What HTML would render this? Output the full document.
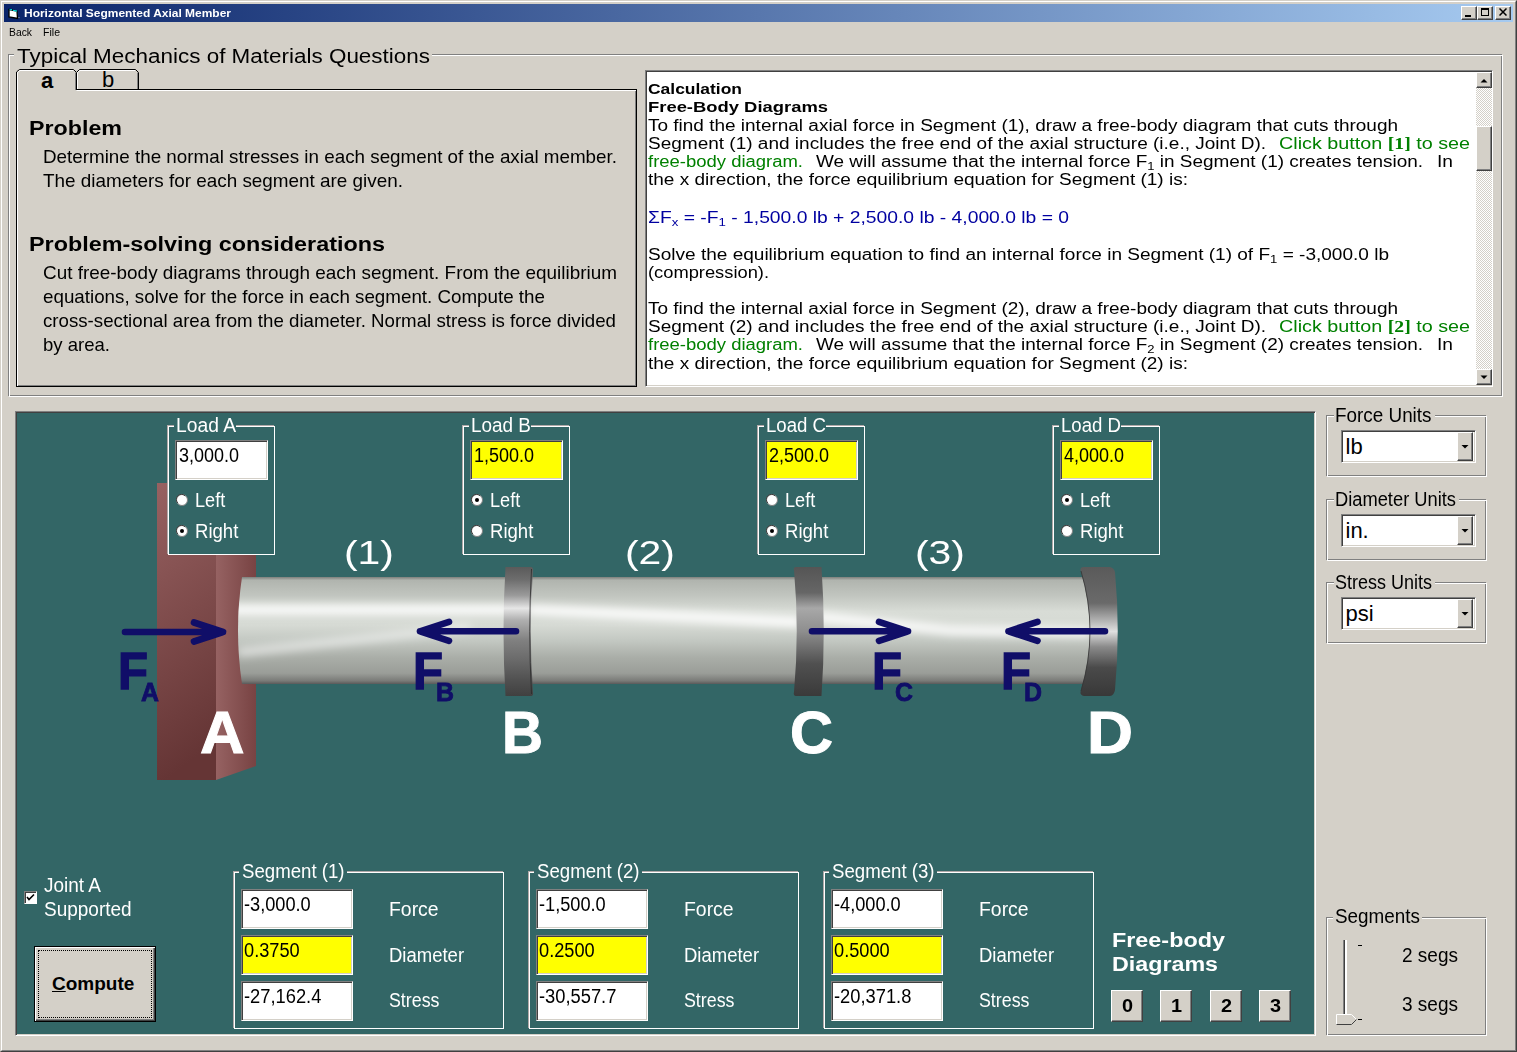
<!DOCTYPE html><html><head><meta charset="utf-8"><style>html,body{margin:0;padding:0;overflow:hidden;width:1517px;height:1052px}body{position:relative;font-family:'Liberation Sans', sans-serif}</style></head><body><div style="position:absolute;left:0px;top:0px;width:1517px;height:1052px;background:#d4d0c8"></div>
<div style="position:absolute;left:1px;top:1px;width:1515px;height:1050px;box-sizing:border-box;border:1px solid;border-color:#fff #808080 #808080 #fff"></div>
<div style="position:absolute;left:0px;top:0px;width:1517px;height:1052px;box-sizing:border-box;border:1px solid;border-color:#d4d0c8 #404040 #404040 #d4d0c8"></div>
<div style="position:absolute;left:4px;top:4px;width:1509px;height:18px;background:linear-gradient(to right,#0a246a,#a6caf0)"></div>
<svg style="position:absolute;left:8px;top:8px" width="14" height="13" viewBox="0 0 14 13"><path d="M1 1.5 L9 3 L9.5 10.5 L7 10 L1 9 Z" fill="#fff" stroke="#000" stroke-width="1.3"/><path d="M1.5 1.8 L4 1.6 M5 2.3 L9 3.1" stroke="#00e6e6" stroke-width="1.1" fill="none"/><path d="M10.5 9 L11.5 10" stroke="#a0a0a0" stroke-width="1"/></svg>
<div style="position:absolute;left:24px;top:7.69px;white-space:pre;line-height:11px;font-family:'Liberation Sans', sans-serif;font-size:11px;font-weight:700;color:#fff;transform:scaleX(1.0877);transform-origin:0 0">Horizontal Segmented Axial Member</div>
<div style="position:absolute;left:1461px;top:6px;width:16px;height:14px;box-sizing:border-box;background:#d4d0c8;border:1px solid;border-color:#fff #404040 #404040 #fff;box-shadow:inset -1px -1px #808080"></div>
<div style="position:absolute;left:1477px;top:6px;width:16px;height:14px;box-sizing:border-box;background:#d4d0c8;border:1px solid;border-color:#fff #404040 #404040 #fff;box-shadow:inset -1px -1px #808080"></div>
<div style="position:absolute;left:1495px;top:6px;width:16px;height:14px;box-sizing:border-box;background:#d4d0c8;border:1px solid;border-color:#fff #404040 #404040 #fff;box-shadow:inset -1px -1px #808080"></div>
<div style="position:absolute;left:1465px;top:15px;width:6px;height:2px;background:#000"></div>
<div style="position:absolute;left:1481px;top:8px;width:8px;height:8px;box-sizing:border-box;border:1px solid #000;border-top-width:2px"></div>
<svg style="position:absolute;left:1499px;top:8px" width="8" height="8" viewBox="0 0 8 8"><path d="M0.5 0.5L7.5 7.5M7.5 0.5L0.5 7.5" stroke="#000" stroke-width="1.5"/></svg>
<div style="position:absolute;left:9px;top:26.69px;white-space:pre;line-height:11px;font-family:'Liberation Sans', sans-serif;font-size:11px;font-weight:400;color:#000;transform:scaleX(0.9400);transform-origin:0 0">Back</div>
<div style="position:absolute;left:43px;top:26.69px;white-space:pre;line-height:11px;font-family:'Liberation Sans', sans-serif;font-size:11px;font-weight:400;color:#000;transform:scaleX(0.9586);transform-origin:0 0">File</div>
<div style="position:absolute;left:8px;top:54px;width:1494px;height:342px;border:1px solid #808080;box-sizing:border-box"></div>
<div style="position:absolute;left:9px;top:55px;width:1494px;height:342px;border:1px solid #fff;box-sizing:border-box"></div>
<div style="position:absolute;left:14px;top:44px;width:418px;height:20px;background:#d4d0c8"></div>
<div style="position:absolute;left:17px;top:46.07px;white-space:pre;line-height:20px;font-family:'Liberation Sans', sans-serif;font-size:20px;font-weight:400;color:#000;transform:scaleX(1.1225);transform-origin:0 0">Typical Mechanics of Materials Questions</div>
<div style="position:absolute;left:16px;top:89px;width:621px;height:298px;box-sizing:border-box;background:#d4d0c8;border:1px solid #000;box-shadow:inset 1px 1px #fff, inset -1px -1px #808080"></div>
<svg style="position:absolute;left:0;top:0" width="700" height="100" viewBox="0 0 700 100"><path d="M76 89 L76 72.5 L79.5 69 L135.5 69 L139 72.5 L139 89 Z" fill="#d4d0c8"/><path d="M76.5 89 L76.5 72.5 L79.5 69.5 L135.5 69.5 L138.5 72.5 L138.5 89" stroke="#000" fill="none"/><path d="M77.5 89 L77.5 72.5 L80 70.5 L135 70.5" stroke="#fff" fill="none"/><path d="M137.5 72.5 L137.5 89" stroke="#808080" fill="none"/><path d="M76 89.5 L637 89.5" stroke="#000"/><path d="M76 90.5 L635 90.5" stroke="#fff"/><path d="M16 92 L16 72 L19 69 L73.5 69 L77 72.5 L77 89 L76 92 Z" fill="#d4d0c8"/><path d="M16.5 92 L16.5 72 L19.5 69.5 L73.5 69.5 L76.5 72.5 L76.5 90" stroke="#000" fill="none"/><path d="M17.5 92 L17.5 72.5 L20 70.5 L73 70.5" stroke="#fff" fill="none"/><path d="M75.5 72.5 L75.5 90" stroke="#808080" fill="none"/></svg>
<div style="position:absolute;left:41px;top:70.38px;white-space:pre;line-height:22px;font-family:'Liberation Sans', sans-serif;font-size:22px;font-weight:700;color:#000">a</div>
<div style="position:absolute;left:102px;top:69.38px;white-space:pre;line-height:22px;font-family:'Liberation Sans', sans-serif;font-size:22px;font-weight:400;color:#000">b</div>
<div style="position:absolute;left:29px;top:118.07px;white-space:pre;line-height:20px;font-family:'Liberation Sans', sans-serif;font-size:20px;font-weight:700;color:#000;transform:scaleX(1.1620);transform-origin:0 0">Problem</div>
<div style="position:absolute;left:43px;top:146.92px;white-space:pre;line-height:19px;font-family:'Liberation Sans', sans-serif;font-size:19px;font-weight:400;color:#000;transform:scaleX(0.9900);transform-origin:0 0">Determine the normal stresses in each segment of the axial member.</div>
<div style="position:absolute;left:43px;top:170.92px;white-space:pre;line-height:19px;font-family:'Liberation Sans', sans-serif;font-size:19px;font-weight:400;color:#000;transform:scaleX(0.9938);transform-origin:0 0">The diameters for each segment are given.</div>
<div style="position:absolute;left:29px;top:234.07px;white-space:pre;line-height:20px;font-family:'Liberation Sans', sans-serif;font-size:20px;font-weight:700;color:#000;transform:scaleX(1.1691);transform-origin:0 0">Problem-solving considerations</div>
<div style="position:absolute;left:43px;top:262.92px;white-space:pre;line-height:19px;font-family:'Liberation Sans', sans-serif;font-size:19px;font-weight:400;color:#000;transform:scaleX(0.9954);transform-origin:0 0">Cut free-body diagrams through each segment. From the equilibrium</div>
<div style="position:absolute;left:43px;top:286.92px;white-space:pre;line-height:19px;font-family:'Liberation Sans', sans-serif;font-size:19px;font-weight:400;color:#000;transform:scaleX(0.9881);transform-origin:0 0">equations, solve for the force in each segment. Compute the</div>
<div style="position:absolute;left:43px;top:310.92px;white-space:pre;line-height:19px;font-family:'Liberation Sans', sans-serif;font-size:19px;font-weight:400;color:#000;transform:scaleX(0.9830);transform-origin:0 0">cross-sectional area from the diameter. Normal stress is force divided</div>
<div style="position:absolute;left:43px;top:334.92px;white-space:pre;line-height:19px;font-family:'Liberation Sans', sans-serif;font-size:19px;font-weight:400;color:#000;transform:scaleX(0.9759);transform-origin:0 0">by area.</div>
<div style="position:absolute;left:645px;top:70px;width:848px;height:317px;box-sizing:border-box;background:#fff;border:1px solid;border-color:#808080 #fff #fff #808080;box-shadow:inset 1px 1px #404040, inset -1px -1px #d4d0c8"></div>
<div style="position:absolute;left:1476px;top:72px;width:16px;height:313px;background-color:#eceae6;background-image:repeating-conic-gradient(#fff 0 25%, #d4d0c8 0 50%);background-size:2px 2px"></div>
<div style="position:absolute;left:1476px;top:72px;width:16px;height:16px;box-sizing:border-box;background:#d4d0c8;border:1px solid;border-color:#fff #404040 #404040 #fff;box-shadow:inset -1px -1px #808080"></div>
<div style="position:absolute;left:1476px;top:126px;width:16px;height:45px;box-sizing:border-box;background:#d4d0c8;border:1px solid;border-color:#fff #404040 #404040 #fff;box-shadow:inset -1px -1px #808080"></div>
<div style="position:absolute;left:1476px;top:369px;width:16px;height:16px;box-sizing:border-box;background:#d4d0c8;border:1px solid;border-color:#fff #404040 #404040 #fff;box-shadow:inset -1px -1px #808080"></div>
<svg style="position:absolute;left:1476px;top:72px" width="16" height="16"><path d="M4.5 10.5 L8 7 L11.5 10.5 Z" fill="#000"/></svg>
<svg style="position:absolute;left:1476px;top:369px" width="16" height="16"><path d="M4.5 6.5 L8 10 L11.5 6.5 Z" fill="#000"/></svg>
<div style="position:absolute;left:648px;top:80.88px;white-space:pre;line-height:15.5px;font-family:'Liberation Sans', sans-serif;font-size:15.5px;font-weight:400;color:#000;transform:scaleX(1.1251);transform-origin:0 0"><b>Calculation</b></div>
<div style="position:absolute;left:648px;top:98.88px;white-space:pre;line-height:15.5px;font-family:'Liberation Sans', sans-serif;font-size:15.5px;font-weight:400;color:#000;transform:scaleX(1.1873);transform-origin:0 0"><b>Free-Body Diagrams</b></div>
<div style="position:absolute;left:648px;top:117.66px;white-space:pre;line-height:16px;font-family:'Liberation Sans', sans-serif;font-size:16px;font-weight:400;color:#000;transform:scaleX(1.1861);transform-origin:0 0">To find the internal axial force in Segment (1), draw a free-body diagram that cuts through</div>
<div style="position:absolute;left:648px;top:135.56px;white-space:pre;line-height:16px;font-family:'Liberation Sans', sans-serif;font-size:16px;font-weight:400;color:#000;transform:scaleX(1.1879);transform-origin:0 0">Segment (1) and includes the free end of the axial structure (i.e., Joint D).</div>
<div style="position:absolute;left:1279px;top:135.56px;white-space:pre;line-height:16px;font-family:'Liberation Sans', sans-serif;font-size:16px;font-weight:400;color:#000;transform:scaleX(1.2344);transform-origin:0 0"><span style="color:#008000">Click button <b style="font-family:'Liberation Serif', serif">[1]</b> to see</span></div>
<div style="position:absolute;left:648px;top:153.66px;white-space:pre;line-height:16px;font-family:'Liberation Sans', sans-serif;font-size:16px;font-weight:400;color:#000;transform:scaleX(1.1542);transform-origin:0 0"><span style="color:#008000">free-body diagram.</span></div>
<div style="position:absolute;left:816px;top:153.66px;white-space:pre;line-height:16px;font-family:'Liberation Sans', sans-serif;font-size:16px;font-weight:400;color:#000;transform:scaleX(1.1838);transform-origin:0 0">We will assume that the internal force F<span style="font-size:11px;position:relative;top:3px">1</span> in Segment (1) creates tension.</div>
<div style="position:absolute;left:1437px;top:153.66px;white-space:pre;line-height:16px;font-family:'Liberation Sans', sans-serif;font-size:16px;font-weight:400;color:#000;transform:scaleX(1.1991);transform-origin:0 0">In</div>
<div style="position:absolute;left:648px;top:171.86px;white-space:pre;line-height:16px;font-family:'Liberation Sans', sans-serif;font-size:16px;font-weight:400;color:#000;transform:scaleX(1.1882);transform-origin:0 0">the x direction, the force equilibrium equation for Segment (1) is:</div>
<div style="position:absolute;left:648px;top:210.46px;white-space:pre;line-height:16px;font-family:'Liberation Sans', sans-serif;font-size:16px;font-weight:400;color:#000;transform:scaleX(1.2053);transform-origin:0 0"><span style="color:#0000a0">&Sigma;F<span style="font-size:11px;position:relative;top:3px">x</span> = -F<span style="font-size:11px;position:relative;top:3px">1</span> - 1,500.0 lb + 2,500.0 lb - 4,000.0 lb = 0</span></div>
<div style="position:absolute;left:648px;top:246.86px;white-space:pre;line-height:16px;font-family:'Liberation Sans', sans-serif;font-size:16px;font-weight:400;color:#000;transform:scaleX(1.1895);transform-origin:0 0">Solve the equilibrium equation to find an internal force in Segment (1) of F<span style="font-size:11px;position:relative;top:3px">1</span> = -3,000.0 lb</div>
<div style="position:absolute;left:648px;top:265.36px;white-space:pre;line-height:16px;font-family:'Liberation Sans', sans-serif;font-size:16px;font-weight:400;color:#000;transform:scaleX(1.1435);transform-origin:0 0">(compression).</div>
<div style="position:absolute;left:648px;top:300.96px;white-space:pre;line-height:16px;font-family:'Liberation Sans', sans-serif;font-size:16px;font-weight:400;color:#000;transform:scaleX(1.1861);transform-origin:0 0">To find the internal axial force in Segment (2), draw a free-body diagram that cuts through</div>
<div style="position:absolute;left:648px;top:318.96px;white-space:pre;line-height:16px;font-family:'Liberation Sans', sans-serif;font-size:16px;font-weight:400;color:#000;transform:scaleX(1.1879);transform-origin:0 0">Segment (2) and includes the free end of the axial structure (i.e., Joint D).</div>
<div style="position:absolute;left:1279px;top:318.96px;white-space:pre;line-height:16px;font-family:'Liberation Sans', sans-serif;font-size:16px;font-weight:400;color:#000;transform:scaleX(1.2344);transform-origin:0 0"><span style="color:#008000">Click button <b style="font-family:'Liberation Serif', serif">[2]</b> to see</span></div>
<div style="position:absolute;left:648px;top:337.26px;white-space:pre;line-height:16px;font-family:'Liberation Sans', sans-serif;font-size:16px;font-weight:400;color:#000;transform:scaleX(1.1542);transform-origin:0 0"><span style="color:#008000">free-body diagram.</span></div>
<div style="position:absolute;left:816px;top:337.26px;white-space:pre;line-height:16px;font-family:'Liberation Sans', sans-serif;font-size:16px;font-weight:400;color:#000;transform:scaleX(1.1838);transform-origin:0 0">We will assume that the internal force F<span style="font-size:11px;position:relative;top:3px">2</span> in Segment (2) creates tension.</div>
<div style="position:absolute;left:1437px;top:337.26px;white-space:pre;line-height:16px;font-family:'Liberation Sans', sans-serif;font-size:16px;font-weight:400;color:#000;transform:scaleX(1.1991);transform-origin:0 0">In</div>
<div style="position:absolute;left:648px;top:355.96px;white-space:pre;line-height:16px;font-family:'Liberation Sans', sans-serif;font-size:16px;font-weight:400;color:#000;transform:scaleX(1.1882);transform-origin:0 0">the x direction, the force equilibrium equation for Segment (2) is:</div>
<div style="position:absolute;left:15px;top:411px;width:1301px;height:625px;box-sizing:border-box;background:#336666;border:1px solid;border-color:#808080 #fff #fff #808080;box-shadow:inset 1px 1px #404040, inset -1px -1px #d4d0c8"></div>
<svg style="position:absolute;left:0;top:0" width="1517" height="1052" viewBox="0 0 1517 1052"><defs>
<linearGradient id="wallL" x1="0" y1="0" x2="0.15" y2="1"><stop offset="0" stop-color="#976161"/><stop offset="1" stop-color="#653535"/></linearGradient>
<linearGradient id="wallR" x1="0" y1="0" x2="1" y2="0"><stop offset="0" stop-color="#966262"/><stop offset="1" stop-color="#784343"/></linearGradient>
<linearGradient id="cylb" x1="0" y1="0" x2="0" y2="1"><stop offset="0" stop-color="#7e807c"/><stop offset="0.03" stop-color="#b0b4ae"/><stop offset="0.18" stop-color="#c2c6c0"/><stop offset="0.32" stop-color="#d8dcd6"/><stop offset="0.45" stop-color="#d6dad4"/><stop offset="0.6" stop-color="#c2c7c1"/><stop offset="0.75" stop-color="#aaaea8"/><stop offset="0.9" stop-color="#9a9d98"/><stop offset="0.97" stop-color="#7a7b78"/><stop offset="1" stop-color="#5a5a5a"/></linearGradient>
<filter id="blur6" x="-20%" y="-50%" width="140%" height="200%"><feGaussianBlur stdDeviation="4.5"/></filter>
<clipPath id="cylclip"><path d="M242 579 L1090 579 L1090 681 L242 681 Q234 630.5 242 579 Z"/></clipPath>
<linearGradient id="ringB" x1="0" y1="0" x2="0" y2="1"><stop offset="0" stop-color="#5a5a5a"/><stop offset="0.1" stop-color="#6e6e6e"/><stop offset="0.22" stop-color="#9a9a9a"/><stop offset="0.32" stop-color="#e6e6e6"/><stop offset="0.41" stop-color="#b0b0b0"/><stop offset="0.57" stop-color="#808080"/><stop offset="0.72" stop-color="#6a6a6a"/><stop offset="0.88" stop-color="#505050"/><stop offset="1" stop-color="#404040"/></linearGradient>
<linearGradient id="ringC" x1="0" y1="0" x2="0" y2="1">
<stop offset="0" stop-color="#555"/><stop offset="0.2" stop-color="#666"/><stop offset="0.32" stop-color="#a8a8a8"/>
<stop offset="0.5" stop-color="#8e8e8e"/><stop offset="0.75" stop-color="#505050"/><stop offset="1" stop-color="#3a3a3a"/>
</linearGradient>
<linearGradient id="ringD" x1="0" y1="0" x2="0" y2="1">
<stop offset="0" stop-color="#5a5a5a"/><stop offset="0.28" stop-color="#6a6a6a"/><stop offset="0.5" stop-color="#e0e0e0"/>
<stop offset="0.62" stop-color="#8a8a8a"/><stop offset="0.78" stop-color="#4a4a4a"/><stop offset="1" stop-color="#383838"/>
</linearGradient>
</defs><path d="M157 483 L216 483 L216 780 L157 780 Z" fill="url(#wallL)"/><path d="M216 483 L256 471 L256 766 L216 780 Z" fill="url(#wallR)"/><path d="M242 577 L1090 577 L1090 684 L242 684 Q234 630.5 242 577 Z" fill="url(#cylb)"/><g clip-path="url(#cylclip)"><g filter="url(#blur6)" fill="#fff"><path d="M230 605 L510 605 L510 614 L230 614 Z" opacity="0.95"/><path d="M238 648 L470 624 L470 631 L238 657 Z" opacity="0.55"/><path d="M528 605 L800 617 L800 627 L528 614 Z" opacity="0.95"/><path d="M818 612 L950 626 L1090 628 L1090 637 L950 635 L818 622 Z" opacity="0.9"/></g></g><path d="M505.5 567 L531.5 567 Q533.5 568 533 570 Q528.5 631 533 693 Q533.5 695.5 531.5 696 L505.5 696 Q501.5 631 505.5 567 Z" fill="url(#ringB)"/><path d="M531.5 569 Q528 631 531.5 694" stroke="#2a2a2a" stroke-width="0.8" fill="none"/><path d="M795.5 567 L821.5 567 Q826 631 821.5 696 L795.5 696 Q793 695 794 692 Q799.5 631 794 570 Q793 568 795.5 567 Z" fill="url(#ringC)"/><path d="M1084 567 L1110 567 Q1114 568 1115 572 Q1120.5 631 1115 690 Q1114 695.5 1110 696 L1084 696 Q1080 695 1080.5 692 Q1099 631 1080.5 570 Q1080 567 1084 567 Z" fill="url(#ringD)"/><path d="M1081 571 Q1099 631 1081 691" stroke="#333" stroke-width="0.8" fill="none"/><path d="M125 632 L223 632 M194 622.5 L223 632 L194 641.5" stroke="#100e68" stroke-width="6.6" stroke-linecap="round" stroke-linejoin="round" fill="none"/><path d="M516 631.3 L420 631.3 M449 621.8 L420 631.3 L449 640.8" stroke="#100e68" stroke-width="6.6" stroke-linecap="round" stroke-linejoin="round" fill="none"/><path d="M812 631.3 L908 631.3 M879 621.8 L908 631.3 L879 640.8" stroke="#100e68" stroke-width="6.6" stroke-linecap="round" stroke-linejoin="round" fill="none"/><path d="M1105 631.3 L1008.5 631.3 M1037.5 621.8 L1008.5 631.3 L1037.5 640.8" stroke="#100e68" stroke-width="6.6" stroke-linecap="round" stroke-linejoin="round" fill="none"/></svg>
<div style="position:absolute;left:118px;top:644.98px;white-space:pre;line-height:52px;font-family:'Liberation Sans', sans-serif;font-size:52px;font-weight:700;color:#100e68;transform:scaleX(0.9444);transform-origin:0 0;-webkit-text-stroke:1.4px #100e68">F</div>
<div style="position:absolute;left:140.5px;top:679.84px;white-space:pre;line-height:25px;font-family:'Liberation Sans', sans-serif;font-size:25px;font-weight:700;color:#100e68;transform:scaleX(0.9965);transform-origin:0 0;-webkit-text-stroke:0.8px #100e68">A</div>
<div style="position:absolute;left:413px;top:644.98px;white-space:pre;line-height:52px;font-family:'Liberation Sans', sans-serif;font-size:52px;font-weight:700;color:#100e68;transform:scaleX(0.9444);transform-origin:0 0;-webkit-text-stroke:1.4px #100e68">F</div>
<div style="position:absolute;left:435.5px;top:679.84px;white-space:pre;line-height:25px;font-family:'Liberation Sans', sans-serif;font-size:25px;font-weight:700;color:#100e68;transform:scaleX(0.9965);transform-origin:0 0;-webkit-text-stroke:0.8px #100e68">B</div>
<div style="position:absolute;left:872px;top:644.98px;white-space:pre;line-height:52px;font-family:'Liberation Sans', sans-serif;font-size:52px;font-weight:700;color:#100e68;transform:scaleX(0.9444);transform-origin:0 0;-webkit-text-stroke:1.4px #100e68">F</div>
<div style="position:absolute;left:894.5px;top:679.84px;white-space:pre;line-height:25px;font-family:'Liberation Sans', sans-serif;font-size:25px;font-weight:700;color:#100e68;transform:scaleX(0.9965);transform-origin:0 0;-webkit-text-stroke:0.8px #100e68">C</div>
<div style="position:absolute;left:1001px;top:644.98px;white-space:pre;line-height:52px;font-family:'Liberation Sans', sans-serif;font-size:52px;font-weight:700;color:#100e68;transform:scaleX(0.9444);transform-origin:0 0;-webkit-text-stroke:1.4px #100e68">F</div>
<div style="position:absolute;left:1023.5px;top:679.84px;white-space:pre;line-height:25px;font-family:'Liberation Sans', sans-serif;font-size:25px;font-weight:700;color:#100e68;transform:scaleX(0.9965);transform-origin:0 0;-webkit-text-stroke:0.8px #100e68">D</div>
<div style="position:absolute;left:200px;top:704.36px;white-space:pre;line-height:59px;font-family:'Liberation Sans', sans-serif;font-size:59px;font-weight:700;color:#fff;transform:scaleX(1.0444);transform-origin:0 0;-webkit-text-stroke:1px #fff">A</div>
<div style="position:absolute;left:502px;top:704.36px;white-space:pre;line-height:59px;font-family:'Liberation Sans', sans-serif;font-size:59px;font-weight:700;color:#fff;transform:scaleX(0.9622);transform-origin:0 0;-webkit-text-stroke:1px #fff">B</div>
<div style="position:absolute;left:790px;top:704.36px;white-space:pre;line-height:59px;font-family:'Liberation Sans', sans-serif;font-size:59px;font-weight:700;color:#fff;transform:scaleX(1.0092);transform-origin:0 0;-webkit-text-stroke:1px #fff">C</div>
<div style="position:absolute;left:1086.5px;top:704.36px;white-space:pre;line-height:59px;font-family:'Liberation Sans', sans-serif;font-size:59px;font-weight:700;color:#fff;transform:scaleX(1.0796);transform-origin:0 0;-webkit-text-stroke:1px #fff">D</div>
<div style="position:absolute;left:344px;top:535.57px;white-space:pre;line-height:33px;font-family:'Liberation Sans', sans-serif;font-size:33px;font-weight:400;color:#fff;transform:scaleX(1.2393);transform-origin:0 0">(1)</div>
<div style="position:absolute;left:625px;top:535.57px;white-space:pre;line-height:33px;font-family:'Liberation Sans', sans-serif;font-size:33px;font-weight:400;color:#fff;transform:scaleX(1.2393);transform-origin:0 0">(2)</div>
<div style="position:absolute;left:915px;top:535.57px;white-space:pre;line-height:33px;font-family:'Liberation Sans', sans-serif;font-size:33px;font-weight:400;color:#fff;transform:scaleX(1.2393);transform-origin:0 0">(3)</div>
<div style="position:absolute;left:167px;top:425px;width:107px;height:129px;box-sizing:border-box;border-top:1px solid #b0a8a8;border-left:1px solid #b0a8a8;background:#336666"></div>
<div style="position:absolute;left:168px;top:426px;width:107px;height:129px;box-sizing:border-box;border:1px solid #fff"></div>
<div style="position:absolute;left:174px;top:416px;width:62px;height:18px;background:#336666"></div>
<div style="position:absolute;left:176px;top:415.07px;white-space:pre;line-height:20px;font-family:'Liberation Sans', sans-serif;font-size:20px;font-weight:400;color:#fff;transform:scaleX(0.9631);transform-origin:0 0">Load A</div>
<div style="position:absolute;left:175px;top:440px;width:93px;height:40px;box-sizing:border-box;background:#fff;border:1px solid;border-color:#808080 #fff #fff #808080;box-shadow:inset 1px 1px #404040, inset -1px -1px #d4d0c8"></div>
<div style="position:absolute;left:179px;top:445.07px;white-space:pre;line-height:20px;font-family:'Liberation Sans', sans-serif;font-size:20px;font-weight:400;color:#000;transform:scaleX(0.8991);transform-origin:0 0">3,000.0</div>
<svg style="position:absolute;left:176px;top:494px" width="12" height="12" viewBox="0 0 12 12"><circle cx="6" cy="6" r="5.5" fill="#fff" stroke="#808080" stroke-width="1"/><path d="M1.8 9 A5 5 0 0 1 9 1.8" stroke="#404040" stroke-width="1" fill="none"/></svg>
<svg style="position:absolute;left:176px;top:525px" width="12" height="12" viewBox="0 0 12 12"><circle cx="6" cy="6" r="5.5" fill="#fff" stroke="#808080" stroke-width="1"/><path d="M1.8 9 A5 5 0 0 1 9 1.8" stroke="#404040" stroke-width="1" fill="none"/><circle cx="6" cy="6" r="2" fill="#000"/></svg>
<div style="position:absolute;left:195px;top:490.07px;white-space:pre;line-height:20px;font-family:'Liberation Sans', sans-serif;font-size:20px;font-weight:400;color:#fff;transform:scaleX(0.9050);transform-origin:0 0">Left</div>
<div style="position:absolute;left:195px;top:521.07px;white-space:pre;line-height:20px;font-family:'Liberation Sans', sans-serif;font-size:20px;font-weight:400;color:#fff;transform:scaleX(0.9286);transform-origin:0 0">Right</div>
<div style="position:absolute;left:462px;top:425px;width:107px;height:129px;box-sizing:border-box;border-top:1px solid #b0a8a8;border-left:1px solid #b0a8a8;background:#336666"></div>
<div style="position:absolute;left:463px;top:426px;width:107px;height:129px;box-sizing:border-box;border:1px solid #fff"></div>
<div style="position:absolute;left:469px;top:416px;width:62px;height:18px;background:#336666"></div>
<div style="position:absolute;left:471px;top:415.07px;white-space:pre;line-height:20px;font-family:'Liberation Sans', sans-serif;font-size:20px;font-weight:400;color:#fff;transform:scaleX(0.9465);transform-origin:0 0">Load B</div>
<div style="position:absolute;left:470px;top:440px;width:93px;height:40px;box-sizing:border-box;background:#ffff00;border:1px solid;border-color:#808080 #fff #fff #808080;box-shadow:inset 1px 1px #404040, inset -1px -1px #d4d0c8"></div>
<div style="position:absolute;left:474px;top:445.07px;white-space:pre;line-height:20px;font-family:'Liberation Sans', sans-serif;font-size:20px;font-weight:400;color:#000;transform:scaleX(0.8991);transform-origin:0 0">1,500.0</div>
<svg style="position:absolute;left:471px;top:494px" width="12" height="12" viewBox="0 0 12 12"><circle cx="6" cy="6" r="5.5" fill="#fff" stroke="#808080" stroke-width="1"/><path d="M1.8 9 A5 5 0 0 1 9 1.8" stroke="#404040" stroke-width="1" fill="none"/><circle cx="6" cy="6" r="2" fill="#000"/></svg>
<svg style="position:absolute;left:471px;top:525px" width="12" height="12" viewBox="0 0 12 12"><circle cx="6" cy="6" r="5.5" fill="#fff" stroke="#808080" stroke-width="1"/><path d="M1.8 9 A5 5 0 0 1 9 1.8" stroke="#404040" stroke-width="1" fill="none"/></svg>
<div style="position:absolute;left:490px;top:490.07px;white-space:pre;line-height:20px;font-family:'Liberation Sans', sans-serif;font-size:20px;font-weight:400;color:#fff;transform:scaleX(0.9050);transform-origin:0 0">Left</div>
<div style="position:absolute;left:490px;top:521.07px;white-space:pre;line-height:20px;font-family:'Liberation Sans', sans-serif;font-size:20px;font-weight:400;color:#fff;transform:scaleX(0.9286);transform-origin:0 0">Right</div>
<div style="position:absolute;left:757px;top:425px;width:107px;height:129px;box-sizing:border-box;border-top:1px solid #b0a8a8;border-left:1px solid #b0a8a8;background:#336666"></div>
<div style="position:absolute;left:758px;top:426px;width:107px;height:129px;box-sizing:border-box;border:1px solid #fff"></div>
<div style="position:absolute;left:764px;top:416px;width:62px;height:18px;background:#336666"></div>
<div style="position:absolute;left:766px;top:415.07px;white-space:pre;line-height:20px;font-family:'Liberation Sans', sans-serif;font-size:20px;font-weight:400;color:#fff;transform:scaleX(0.9302);transform-origin:0 0">Load C</div>
<div style="position:absolute;left:765px;top:440px;width:93px;height:40px;box-sizing:border-box;background:#ffff00;border:1px solid;border-color:#808080 #fff #fff #808080;box-shadow:inset 1px 1px #404040, inset -1px -1px #d4d0c8"></div>
<div style="position:absolute;left:769px;top:445.07px;white-space:pre;line-height:20px;font-family:'Liberation Sans', sans-serif;font-size:20px;font-weight:400;color:#000;transform:scaleX(0.8991);transform-origin:0 0">2,500.0</div>
<svg style="position:absolute;left:766px;top:494px" width="12" height="12" viewBox="0 0 12 12"><circle cx="6" cy="6" r="5.5" fill="#fff" stroke="#808080" stroke-width="1"/><path d="M1.8 9 A5 5 0 0 1 9 1.8" stroke="#404040" stroke-width="1" fill="none"/></svg>
<svg style="position:absolute;left:766px;top:525px" width="12" height="12" viewBox="0 0 12 12"><circle cx="6" cy="6" r="5.5" fill="#fff" stroke="#808080" stroke-width="1"/><path d="M1.8 9 A5 5 0 0 1 9 1.8" stroke="#404040" stroke-width="1" fill="none"/><circle cx="6" cy="6" r="2" fill="#000"/></svg>
<div style="position:absolute;left:785px;top:490.07px;white-space:pre;line-height:20px;font-family:'Liberation Sans', sans-serif;font-size:20px;font-weight:400;color:#fff;transform:scaleX(0.9050);transform-origin:0 0">Left</div>
<div style="position:absolute;left:785px;top:521.07px;white-space:pre;line-height:20px;font-family:'Liberation Sans', sans-serif;font-size:20px;font-weight:400;color:#fff;transform:scaleX(0.9286);transform-origin:0 0">Right</div>
<div style="position:absolute;left:1052px;top:425px;width:107px;height:129px;box-sizing:border-box;border-top:1px solid #b0a8a8;border-left:1px solid #b0a8a8;background:#336666"></div>
<div style="position:absolute;left:1053px;top:426px;width:107px;height:129px;box-sizing:border-box;border:1px solid #fff"></div>
<div style="position:absolute;left:1059px;top:416px;width:62px;height:18px;background:#336666"></div>
<div style="position:absolute;left:1061px;top:415.07px;white-space:pre;line-height:20px;font-family:'Liberation Sans', sans-serif;font-size:20px;font-weight:400;color:#fff;transform:scaleX(0.9302);transform-origin:0 0">Load D</div>
<div style="position:absolute;left:1060px;top:440px;width:93px;height:40px;box-sizing:border-box;background:#ffff00;border:1px solid;border-color:#808080 #fff #fff #808080;box-shadow:inset 1px 1px #404040, inset -1px -1px #d4d0c8"></div>
<div style="position:absolute;left:1064px;top:445.07px;white-space:pre;line-height:20px;font-family:'Liberation Sans', sans-serif;font-size:20px;font-weight:400;color:#000;transform:scaleX(0.8991);transform-origin:0 0">4,000.0</div>
<svg style="position:absolute;left:1061px;top:494px" width="12" height="12" viewBox="0 0 12 12"><circle cx="6" cy="6" r="5.5" fill="#fff" stroke="#808080" stroke-width="1"/><path d="M1.8 9 A5 5 0 0 1 9 1.8" stroke="#404040" stroke-width="1" fill="none"/><circle cx="6" cy="6" r="2" fill="#000"/></svg>
<svg style="position:absolute;left:1061px;top:525px" width="12" height="12" viewBox="0 0 12 12"><circle cx="6" cy="6" r="5.5" fill="#fff" stroke="#808080" stroke-width="1"/><path d="M1.8 9 A5 5 0 0 1 9 1.8" stroke="#404040" stroke-width="1" fill="none"/></svg>
<div style="position:absolute;left:1080px;top:490.07px;white-space:pre;line-height:20px;font-family:'Liberation Sans', sans-serif;font-size:20px;font-weight:400;color:#fff;transform:scaleX(0.9050);transform-origin:0 0">Left</div>
<div style="position:absolute;left:1080px;top:521.07px;white-space:pre;line-height:20px;font-family:'Liberation Sans', sans-serif;font-size:20px;font-weight:400;color:#fff;transform:scaleX(0.9286);transform-origin:0 0">Right</div>
<div style="position:absolute;left:233px;top:871px;width:270px;height:157px;box-sizing:border-box;border-top:1px solid #b0a8a8;border-left:1px solid #b0a8a8"></div>
<div style="position:absolute;left:234px;top:872px;width:270px;height:157px;box-sizing:border-box;border:1px solid #fff"></div>
<div style="position:absolute;left:239px;top:862px;width:108px;height:18px;background:#336666"></div>
<div style="position:absolute;left:242px;top:861.07px;white-space:pre;line-height:20px;font-family:'Liberation Sans', sans-serif;font-size:20px;font-weight:400;color:#fff;transform:scaleX(0.9318);transform-origin:0 0">Segment (1)</div>
<div style="position:absolute;left:241px;top:889px;width:112px;height:40px;box-sizing:border-box;background:#fff;border:1px solid;border-color:#808080 #fff #fff #808080;box-shadow:inset 1px 1px #404040, inset -1px -1px #d4d0c8"></div>
<div style="position:absolute;left:244px;top:894.07px;white-space:pre;line-height:20px;font-family:'Liberation Sans', sans-serif;font-size:20px;font-weight:400;color:#000;transform:scaleX(0.9088);transform-origin:0 0">-3,000.0</div>
<div style="position:absolute;left:241px;top:935px;width:112px;height:40px;box-sizing:border-box;background:#ffff00;border:1px solid;border-color:#808080 #fff #fff #808080;box-shadow:inset 1px 1px #404040, inset -1px -1px #d4d0c8"></div>
<div style="position:absolute;left:244px;top:940.07px;white-space:pre;line-height:20px;font-family:'Liberation Sans', sans-serif;font-size:20px;font-weight:400;color:#000;transform:scaleX(0.9105);transform-origin:0 0">0.3750</div>
<div style="position:absolute;left:241px;top:981px;width:112px;height:40px;box-sizing:border-box;background:#fff;border:1px solid;border-color:#808080 #fff #fff #808080;box-shadow:inset 1px 1px #404040, inset -1px -1px #d4d0c8"></div>
<div style="position:absolute;left:244px;top:986.07px;white-space:pre;line-height:20px;font-family:'Liberation Sans', sans-serif;font-size:20px;font-weight:400;color:#000;transform:scaleX(0.9158);transform-origin:0 0">-27,162.4</div>
<div style="position:absolute;left:389px;top:899.07px;white-space:pre;line-height:20px;font-family:'Liberation Sans', sans-serif;font-size:20px;font-weight:400;color:#fff;transform:scaleX(0.9696);transform-origin:0 0">Force</div>
<div style="position:absolute;left:389px;top:945.07px;white-space:pre;line-height:20px;font-family:'Liberation Sans', sans-serif;font-size:20px;font-weight:400;color:#fff;transform:scaleX(0.9254);transform-origin:0 0">Diameter</div>
<div style="position:absolute;left:389px;top:990.07px;white-space:pre;line-height:20px;font-family:'Liberation Sans', sans-serif;font-size:20px;font-weight:400;color:#fff;transform:scaleX(0.8900);transform-origin:0 0">Stress</div>
<div style="position:absolute;left:528px;top:871px;width:270px;height:157px;box-sizing:border-box;border-top:1px solid #b0a8a8;border-left:1px solid #b0a8a8"></div>
<div style="position:absolute;left:529px;top:872px;width:270px;height:157px;box-sizing:border-box;border:1px solid #fff"></div>
<div style="position:absolute;left:534px;top:862px;width:108px;height:18px;background:#336666"></div>
<div style="position:absolute;left:537px;top:861.07px;white-space:pre;line-height:20px;font-family:'Liberation Sans', sans-serif;font-size:20px;font-weight:400;color:#fff;transform:scaleX(0.9318);transform-origin:0 0">Segment (2)</div>
<div style="position:absolute;left:536px;top:889px;width:112px;height:40px;box-sizing:border-box;background:#fff;border:1px solid;border-color:#808080 #fff #fff #808080;box-shadow:inset 1px 1px #404040, inset -1px -1px #d4d0c8"></div>
<div style="position:absolute;left:539px;top:894.07px;white-space:pre;line-height:20px;font-family:'Liberation Sans', sans-serif;font-size:20px;font-weight:400;color:#000;transform:scaleX(0.9088);transform-origin:0 0">-1,500.0</div>
<div style="position:absolute;left:536px;top:935px;width:112px;height:40px;box-sizing:border-box;background:#ffff00;border:1px solid;border-color:#808080 #fff #fff #808080;box-shadow:inset 1px 1px #404040, inset -1px -1px #d4d0c8"></div>
<div style="position:absolute;left:539px;top:940.07px;white-space:pre;line-height:20px;font-family:'Liberation Sans', sans-serif;font-size:20px;font-weight:400;color:#000;transform:scaleX(0.9105);transform-origin:0 0">0.2500</div>
<div style="position:absolute;left:536px;top:981px;width:112px;height:40px;box-sizing:border-box;background:#fff;border:1px solid;border-color:#808080 #fff #fff #808080;box-shadow:inset 1px 1px #404040, inset -1px -1px #d4d0c8"></div>
<div style="position:absolute;left:539px;top:986.07px;white-space:pre;line-height:20px;font-family:'Liberation Sans', sans-serif;font-size:20px;font-weight:400;color:#000;transform:scaleX(0.9158);transform-origin:0 0">-30,557.7</div>
<div style="position:absolute;left:684px;top:899.07px;white-space:pre;line-height:20px;font-family:'Liberation Sans', sans-serif;font-size:20px;font-weight:400;color:#fff;transform:scaleX(0.9696);transform-origin:0 0">Force</div>
<div style="position:absolute;left:684px;top:945.07px;white-space:pre;line-height:20px;font-family:'Liberation Sans', sans-serif;font-size:20px;font-weight:400;color:#fff;transform:scaleX(0.9254);transform-origin:0 0">Diameter</div>
<div style="position:absolute;left:684px;top:990.07px;white-space:pre;line-height:20px;font-family:'Liberation Sans', sans-serif;font-size:20px;font-weight:400;color:#fff;transform:scaleX(0.8900);transform-origin:0 0">Stress</div>
<div style="position:absolute;left:823px;top:871px;width:270px;height:157px;box-sizing:border-box;border-top:1px solid #b0a8a8;border-left:1px solid #b0a8a8"></div>
<div style="position:absolute;left:824px;top:872px;width:270px;height:157px;box-sizing:border-box;border:1px solid #fff"></div>
<div style="position:absolute;left:829px;top:862px;width:108px;height:18px;background:#336666"></div>
<div style="position:absolute;left:832px;top:861.07px;white-space:pre;line-height:20px;font-family:'Liberation Sans', sans-serif;font-size:20px;font-weight:400;color:#fff;transform:scaleX(0.9318);transform-origin:0 0">Segment (3)</div>
<div style="position:absolute;left:831px;top:889px;width:112px;height:40px;box-sizing:border-box;background:#fff;border:1px solid;border-color:#808080 #fff #fff #808080;box-shadow:inset 1px 1px #404040, inset -1px -1px #d4d0c8"></div>
<div style="position:absolute;left:834px;top:894.07px;white-space:pre;line-height:20px;font-family:'Liberation Sans', sans-serif;font-size:20px;font-weight:400;color:#000;transform:scaleX(0.9088);transform-origin:0 0">-4,000.0</div>
<div style="position:absolute;left:831px;top:935px;width:112px;height:40px;box-sizing:border-box;background:#ffff00;border:1px solid;border-color:#808080 #fff #fff #808080;box-shadow:inset 1px 1px #404040, inset -1px -1px #d4d0c8"></div>
<div style="position:absolute;left:834px;top:940.07px;white-space:pre;line-height:20px;font-family:'Liberation Sans', sans-serif;font-size:20px;font-weight:400;color:#000;transform:scaleX(0.9105);transform-origin:0 0">0.5000</div>
<div style="position:absolute;left:831px;top:981px;width:112px;height:40px;box-sizing:border-box;background:#fff;border:1px solid;border-color:#808080 #fff #fff #808080;box-shadow:inset 1px 1px #404040, inset -1px -1px #d4d0c8"></div>
<div style="position:absolute;left:834px;top:986.07px;white-space:pre;line-height:20px;font-family:'Liberation Sans', sans-serif;font-size:20px;font-weight:400;color:#000;transform:scaleX(0.9158);transform-origin:0 0">-20,371.8</div>
<div style="position:absolute;left:979px;top:899.07px;white-space:pre;line-height:20px;font-family:'Liberation Sans', sans-serif;font-size:20px;font-weight:400;color:#fff;transform:scaleX(0.9696);transform-origin:0 0">Force</div>
<div style="position:absolute;left:979px;top:945.07px;white-space:pre;line-height:20px;font-family:'Liberation Sans', sans-serif;font-size:20px;font-weight:400;color:#fff;transform:scaleX(0.9254);transform-origin:0 0">Diameter</div>
<div style="position:absolute;left:979px;top:990.07px;white-space:pre;line-height:20px;font-family:'Liberation Sans', sans-serif;font-size:20px;font-weight:400;color:#fff;transform:scaleX(0.8900);transform-origin:0 0">Stress</div>
<div style="position:absolute;left:24px;top:891px;width:13px;height:13px;box-sizing:border-box;background:#fff;border:1px solid;border-color:#808080 #fff #fff #808080;box-shadow:inset 1px 1px #404040"></div>
<svg style="position:absolute;left:24px;top:891px" width="13" height="13"><path d="M3 6 L5 8.5 L10 3.5" stroke="#000" stroke-width="1.6" fill="none"/></svg>
<div style="position:absolute;left:44px;top:875.07px;white-space:pre;line-height:20px;font-family:'Liberation Sans', sans-serif;font-size:20px;font-weight:400;color:#fff;transform:scaleX(0.9500);transform-origin:0 0">Joint A</div>
<div style="position:absolute;left:44px;top:899.07px;white-space:pre;line-height:20px;font-family:'Liberation Sans', sans-serif;font-size:20px;font-weight:400;color:#fff;transform:scaleX(0.9500);transform-origin:0 0">Supported</div>
<div style="position:absolute;left:34px;top:946px;width:122px;height:76px;box-sizing:border-box;background:#d4d0c8;border:1px solid #000;box-shadow:inset 1px 1px #fff, inset -1px -1px #404040, inset -2px -2px #808080"></div>
<div style="position:absolute;left:38px;top:950px;width:114px;height:68px;box-sizing:border-box;border:1px dotted #000"></div>
<div style="position:absolute;left:52px;top:973.92px;white-space:pre;line-height:19px;font-family:'Liberation Sans', sans-serif;font-size:19px;font-weight:700;color:#000"><u>C</u>ompute</div>
<div style="position:absolute;left:1112px;top:929.87px;white-space:pre;line-height:20px;font-family:'Liberation Sans', sans-serif;font-size:20px;font-weight:700;color:#fff;transform:scaleX(1.1687);transform-origin:0 0">Free-body</div>
<div style="position:absolute;left:1112px;top:953.87px;white-space:pre;line-height:20px;font-family:'Liberation Sans', sans-serif;font-size:20px;font-weight:700;color:#fff;transform:scaleX(1.1628);transform-origin:0 0">Diagrams</div>
<div style="position:absolute;left:1111px;top:990px;width:32px;height:32px;box-sizing:border-box;background:#d4d0c8;border:1px solid;border-color:#fff #404040 #404040 #fff;box-shadow:inset -1px -1px #808080"></div>
<div style="position:absolute;left:1121.5px;top:995.72px;white-space:pre;line-height:19px;font-family:'Liberation Sans', sans-serif;font-size:19px;font-weight:700;color:#000;transform:scaleX(1.0473);transform-origin:0 0">0</div>
<div style="position:absolute;left:1160px;top:990px;width:32px;height:32px;box-sizing:border-box;background:#d4d0c8;border:1px solid;border-color:#fff #404040 #404040 #fff;box-shadow:inset -1px -1px #808080"></div>
<div style="position:absolute;left:1170.5px;top:995.72px;white-space:pre;line-height:19px;font-family:'Liberation Sans', sans-serif;font-size:19px;font-weight:700;color:#000;transform:scaleX(1.0473);transform-origin:0 0">1</div>
<div style="position:absolute;left:1210px;top:990px;width:32px;height:32px;box-sizing:border-box;background:#d4d0c8;border:1px solid;border-color:#fff #404040 #404040 #fff;box-shadow:inset -1px -1px #808080"></div>
<div style="position:absolute;left:1220.5px;top:995.72px;white-space:pre;line-height:19px;font-family:'Liberation Sans', sans-serif;font-size:19px;font-weight:700;color:#000;transform:scaleX(1.0473);transform-origin:0 0">2</div>
<div style="position:absolute;left:1259px;top:990px;width:32px;height:32px;box-sizing:border-box;background:#d4d0c8;border:1px solid;border-color:#fff #404040 #404040 #fff;box-shadow:inset -1px -1px #808080"></div>
<div style="position:absolute;left:1269.5px;top:995.72px;white-space:pre;line-height:19px;font-family:'Liberation Sans', sans-serif;font-size:19px;font-weight:700;color:#000;transform:scaleX(1.0473);transform-origin:0 0">3</div>
<div style="position:absolute;left:1326px;top:415px;width:160px;height:61px;border:1px solid #808080;box-sizing:border-box"></div>
<div style="position:absolute;left:1327px;top:416px;width:160px;height:61px;border:1px solid #fff;box-sizing:border-box"></div>
<div style="position:absolute;left:1334px;top:405px;width:100.5px;height:18px;background:#d4d0c8"></div>
<div style="position:absolute;left:1335px;top:405.07px;white-space:pre;line-height:20px;font-family:'Liberation Sans', sans-serif;font-size:20px;font-weight:400;color:#000;transform:scaleX(0.9438);transform-origin:0 0">Force Units</div>
<div style="position:absolute;left:1341px;top:430px;width:135px;height:33px;box-sizing:border-box;background:#fff;border:1px solid;border-color:#808080 #fff #fff #808080;box-shadow:inset 1px 1px #404040, inset -1px -1px #d4d0c8"></div>
<div style="position:absolute;left:1457px;top:432px;width:16px;height:29px;box-sizing:border-box;background:#d4d0c8;border:1px solid;border-color:#fff #404040 #404040 #fff;box-shadow:inset -1px -1px #808080"></div>
<svg style="position:absolute;left:1457px;top:432px" width="16" height="29"><path d="M4.5 13 L11.5 13 L8 16.5 Z" fill="#000"/></svg>
<div style="position:absolute;left:1345.5px;top:436.38px;white-space:pre;line-height:22px;font-family:'Liberation Sans', sans-serif;font-size:22px;font-weight:400;color:#000">lb</div>
<div style="position:absolute;left:1326px;top:499px;width:160px;height:61px;border:1px solid #808080;box-sizing:border-box"></div>
<div style="position:absolute;left:1327px;top:500px;width:160px;height:61px;border:1px solid #fff;box-sizing:border-box"></div>
<div style="position:absolute;left:1334px;top:489px;width:125px;height:18px;background:#d4d0c8"></div>
<div style="position:absolute;left:1335px;top:489.07px;white-space:pre;line-height:20px;font-family:'Liberation Sans', sans-serif;font-size:20px;font-weight:400;color:#000;transform:scaleX(0.9148);transform-origin:0 0">Diameter Units</div>
<div style="position:absolute;left:1341px;top:514px;width:135px;height:33px;box-sizing:border-box;background:#fff;border:1px solid;border-color:#808080 #fff #fff #808080;box-shadow:inset 1px 1px #404040, inset -1px -1px #d4d0c8"></div>
<div style="position:absolute;left:1457px;top:516px;width:16px;height:29px;box-sizing:border-box;background:#d4d0c8;border:1px solid;border-color:#fff #404040 #404040 #fff;box-shadow:inset -1px -1px #808080"></div>
<svg style="position:absolute;left:1457px;top:516px" width="16" height="29"><path d="M4.5 13 L11.5 13 L8 16.5 Z" fill="#000"/></svg>
<div style="position:absolute;left:1345.5px;top:520.38px;white-space:pre;line-height:22px;font-family:'Liberation Sans', sans-serif;font-size:22px;font-weight:400;color:#000">in.</div>
<div style="position:absolute;left:1326px;top:582px;width:160px;height:61px;border:1px solid #808080;box-sizing:border-box"></div>
<div style="position:absolute;left:1327px;top:583px;width:160px;height:61px;border:1px solid #fff;box-sizing:border-box"></div>
<div style="position:absolute;left:1334px;top:572px;width:101px;height:18px;background:#d4d0c8"></div>
<div style="position:absolute;left:1335px;top:572.07px;white-space:pre;line-height:20px;font-family:'Liberation Sans', sans-serif;font-size:20px;font-weight:400;color:#000;transform:scaleX(0.8997);transform-origin:0 0">Stress Units</div>
<div style="position:absolute;left:1341px;top:597px;width:135px;height:33px;box-sizing:border-box;background:#fff;border:1px solid;border-color:#808080 #fff #fff #808080;box-shadow:inset 1px 1px #404040, inset -1px -1px #d4d0c8"></div>
<div style="position:absolute;left:1457px;top:599px;width:16px;height:29px;box-sizing:border-box;background:#d4d0c8;border:1px solid;border-color:#fff #404040 #404040 #fff;box-shadow:inset -1px -1px #808080"></div>
<svg style="position:absolute;left:1457px;top:599px" width="16" height="29"><path d="M4.5 13 L11.5 13 L8 16.5 Z" fill="#000"/></svg>
<div style="position:absolute;left:1345.5px;top:603.38px;white-space:pre;line-height:22px;font-family:'Liberation Sans', sans-serif;font-size:22px;font-weight:400;color:#000">psi</div>
<div style="position:absolute;left:1326px;top:917px;width:160px;height:118px;border:1px solid #808080;box-sizing:border-box"></div>
<div style="position:absolute;left:1327px;top:918px;width:160px;height:118px;border:1px solid #fff;box-sizing:border-box"></div>
<div style="position:absolute;left:1333px;top:905px;width:89px;height:18px;background:#d4d0c8"></div>
<div style="position:absolute;left:1335px;top:906.07px;white-space:pre;line-height:20px;font-family:'Liberation Sans', sans-serif;font-size:20px;font-weight:400;color:#000;transform:scaleX(0.9438);transform-origin:0 0">Segments</div>
<div style="position:absolute;left:1343px;top:940px;width:1px;height:75px;background:#808080"></div>
<div style="position:absolute;left:1344px;top:940px;width:1px;height:75px;background:#404040"></div>
<div style="position:absolute;left:1345px;top:940px;width:2px;height:75px;background:#fff"></div>
<svg style="position:absolute;left:1335px;top:1013px" width="24" height="13"><path d="M1.5 1.5 L16.5 1.5 L21.5 6.5 L16.5 11.5 L1.5 11.5 Z" fill="#d4d0c8" stroke="#fff" stroke-width="1"/><path d="M1.5 11.5 L16.5 11.5 L21.5 6.5" stroke="#404040" stroke-width="1" fill="none"/></svg>
<div style="position:absolute;left:1358px;top:945px;width:4px;height:1px;background:#000"></div>
<div style="position:absolute;left:1358px;top:1019px;width:4px;height:1px;background:#000"></div>
<div style="position:absolute;left:1402px;top:945.07px;white-space:pre;line-height:20px;font-family:'Liberation Sans', sans-serif;font-size:20px;font-weight:400;color:#000;transform:scaleX(0.9500);transform-origin:0 0">2 segs</div>
<div style="position:absolute;left:1402px;top:994.07px;white-space:pre;line-height:20px;font-family:'Liberation Sans', sans-serif;font-size:20px;font-weight:400;color:#000;transform:scaleX(0.9500);transform-origin:0 0">3 segs</div></body></html>
